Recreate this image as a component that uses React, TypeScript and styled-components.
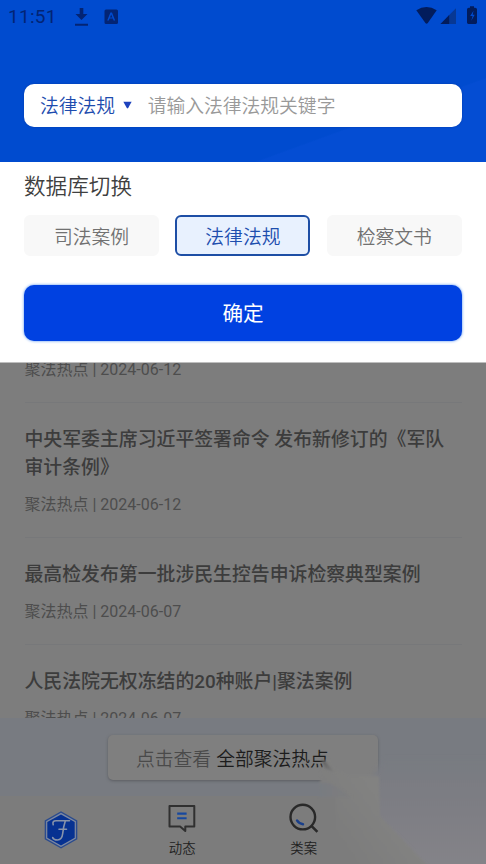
import React from "react";
import styled, { createGlobalStyle } from "styled-components";

const GlobalStyle = createGlobalStyle`
  * { box-sizing: border-box; }
  body { margin: 0; font-family: Roboto, "Noto Sans CJK SC", sans-serif; }
  button, input { font-family: inherit; }
`;

const Screen = styled.div`
  width: 486px;
  height: 864px;
  display: flex;
  flex-direction: column;
  overflow: hidden;
  background: #7d7d7d;
`;

const Header = styled.header`
  flex: 0 0 162px;
  background: linear-gradient(160deg, #004bcf 75%, #044dd3 75.5%);
`;

const StatusBar = styled.div`
  height: 84px;
  padding: 6px 8px 0;
  display: flex;
  align-items: flex-start;
  color: #032474;
`;

const Clock = styled.span`
  width: 66px;
  font-size: 19px;
  line-height: 22px;
  letter-spacing: 0.3px;
`;

const StatusIcons = styled.svg`
  display: block;
  margin-top: -6px;
`;

const Spacer = styled.div`
  flex: 1;
`;

const SearchBox = styled.div`
  margin: 0 24px;
  height: 43px;
  padding: 3px 16px 0;
  display: flex;
  align-items: center;
  background: #fff;
  border-radius: 10px;
  box-shadow: 0 0 2px #003aa8;
  font-size: 18.8px;
  font-weight: 350;
  line-height: 28px;
`;

const Scope = styled.span`
  color: #1d4cae;
  white-space: nowrap;
`;

const Caret = styled.svg`
  margin: -4px 16px 0 7.5px;
`;

const Placeholder = styled.span`
  color: #999;
  white-space: nowrap;
`;

const Panel = styled.section`
  flex: 0 0 201px;
  padding: 9px 24px 0;
  background: #fff;
  border-bottom: 1px solid #bebebe;
`;

const PanelTitle = styled.h2`
  margin: 0;
  height: 44px;
  font-size: 21.6px;
  font-weight: 350;
  line-height: 32px;
  color: #404040;
`;

const Options = styled.div`
  display: grid;
  grid-template-columns: repeat(3, 135px);
  column-gap: 16.4px;
`;

const Option = styled.button<{ $active?: boolean }>`
  height: 41px;
  padding: 5px 0 0;
  border: 2px solid ${(p) => (p.$active ? "#1d4ea5" : "#f8f8f8")};
  border-radius: 6px;
  background: ${(p) => (p.$active ? "#e8f1fe" : "#f8f8f8")};
  color: ${(p) => (p.$active ? "#1d4eae" : "#717171")};
  font-size: 18.8px;
  font-weight: 350;
  line-height: 28px;
`;

const Confirm = styled.button`
  display: block;
  width: 100%;
  height: 56px;
  margin-top: 29px;
  padding: 2px 0 0;
  border: 0;
  border-radius: 10px;
  background: #0041e1;
  box-shadow: 0 0 3px #4b8cef;
  color: #fff;
  font-size: 20.6px;
  line-height: 30px;
`;

const Feed = styled.main`
  flex: 0 0 355px;
  padding: 0 24.5px;
  overflow: hidden;
`;

const Article = styled.article`
  padding: 23px 0 19px;
  border-bottom: 1px solid #77787a;
  &:first-child {
    padding-top: 0;
    margin-top: -6px;
  }
`;

const ArticleTitle = styled.h3`
  margin: 0 10px 10px 0;
  font-size: 18.86px;
  font-weight: 500;
  line-height: 28px;
  color: #3c3c3c;
`;

const Meta = styled.div`
  font-size: 16px;
  line-height: 26px;
  color: #4d4d4d;
`;

const Footer = styled.footer`
  position: relative;
  flex: 0 0 146px;
`;

const MoreStrip = styled.div`
  height: 78px;
  padding-top: 17px;
  background: #787b81;
`;

const MoreButton = styled.button`
  display: flex;
  align-items: center;
  gap: 5px;
  width: 270px;
  height: 45px;
  margin: 0 0 0 108px;
  padding: 5px 0 0 28px;
  border: 0;
  border-radius: 5px;
  background: #7f7f7f;
  box-shadow: 0 1px 3px #5b5d62;
  color: #4a4a4a;
  font-size: 18.8px;
  font-weight: 350;
  line-height: 28px;
  white-space: nowrap;
`;

const MoreStrong = styled.span`
  color: #1c1c1c;
`;

const Nav = styled.nav`
  height: 68px;
  display: grid;
  grid-template-columns: repeat(4, 121.5px);
  background: #7c7c7c;
`;

const NavItem = styled.div`
  display: flex;
  flex-direction: column;
  align-items: center;
  padding: 5px 0 0;
  font-size: 13.4px;
  font-weight: 350;
  line-height: 20px;
  color: #202020;
`;

const NavIcon = styled.svg`
  display: block;
  margin-bottom: 4px;
`;

const Logo = styled.svg`
  display: block;
  margin-top: 9px;
`;

const Sheen = styled.svg`
  position: absolute;
  right: 0;
  bottom: 0;
  pointer-events: none;
`;

const articles = [
  { title: "中央军委主席习近平签署命令 发布新修订的《军队审计条例》", date: "2024-06-12" },
  { title: "最高检发布第一批涉民生控告申诉检察典型案例", date: "2024-06-07" },
  { title: "人民法院无权冻结的20种账户|聚法案例", date: "2024-06-07" },
];

const NotificationIcons = () => (
  <StatusIcons width="46" height="28" viewBox="74 0 46 28" fill="#032474">
    <path d="M79.7 8h3.6v6h4.2l-6 6-6-6h4.2zM75 23.8h13v1.9H75z" />
    <path
      fillRule="evenodd"
      d="M106 9.5h10.5q1.5 0 1.5 1.5v11.5q0 1.5-1.5 1.5H106q-1.5 0-1.5-1.5V11q0-1.5 1.5-1.5zM110.4 12.5l-3.2 8h1.6l.7-1.9h3.4l.7 1.9h1.6l-3.2-8zm.8 2 1.2 2.9H110z"
    />
  </StatusIcons>
);

const DeviceIcons = () => (
  <StatusIcons width="65" height="28" viewBox="413 0 65 28" fill="#021c5c">
    <path d="M416.3 10.2Q426.5 4 436.7 10.2L427.8 23q-1.2 1.4-2.4 0z" />
    <path d="M456 8.2V24h-8V16.2z" fill="#073894" />
    <path d="M449.2 15V24h-8.8z" />
    <path
      fillRule="evenodd"
      d="M470 6.2h4v1.6h1.2q1.8 0 1.8 1.8v13q0 1.4-1.4 1.4h-7.2q-1.4 0-1.4-1.4v-13q0-1.8 1.8-1.8h1.2zM473.5 10.8l-3.3 5.2h2.4l-1.3 4.8 3.4-6h-2z"
    />
  </StatusIcons>
);

export default function App() {
  return (
    <Screen>
      <GlobalStyle />
      <Header>
        <StatusBar>
          <Clock>11:51</Clock>
          <NotificationIcons />
          <Spacer />
          <DeviceIcons />
        </StatusBar>
        <SearchBox>
          <Scope>法律法规</Scope>
          <Caret width="9" height="8" viewBox="0 0 8 7" fill="#1d42bd">
            <path d="M.3.5h7.4L4.6 6.2q-.6.8-1.2 0z" />
          </Caret>
          <Placeholder>请输入法律法规关键字</Placeholder>
        </SearchBox>
      </Header>

      <Panel>
        <PanelTitle>数据库切换</PanelTitle>
        <Options>
          <Option>司法案例</Option>
          <Option $active>法律法规</Option>
          <Option>检察文书</Option>
        </Options>
        <Confirm>确定</Confirm>
      </Panel>

      <Feed>
        <Article>
          <Meta>聚法热点 | 2024-06-12</Meta>
        </Article>
        {articles.map((a) => (
          <Article key={a.title}>
            <ArticleTitle>{a.title}</ArticleTitle>
            <Meta>聚法热点 | {a.date}</Meta>
          </Article>
        ))}
      </Feed>

      <Footer>
        <MoreStrip>
          <MoreButton>
            <span>点击查看</span>
            <MoreStrong>全部聚法热点</MoreStrong>
          </MoreButton>
        </MoreStrip>
        <Nav>
          <NavItem>
            <Logo width="36" height="40" viewBox="0 0 36 40">
              <path d="M18 1.2 34.3 10.5V29.2L18 38.6 1.7 29.2V10.5z" fill="#2b4b8d" />
              <path d="M18 2.8 32.9 11.3V28.4L18 37 3.1 28.4V11.3z" fill="#7e89a0" />
              <path d="M18 4.4 31.7 12.1V27.7L18 35.4 4.3 27.7V12.1z" fill="#063191" />
              <path
                d="M10.2 14.7Q9 10.8 13 10.8H26.5M22.3 11Q20.3 17 19.7 23.5 19 29.8 14.4 30 10.6 29.9 9.7 27.6M16 19.3h7.5"
                fill="none"
                stroke="#8793aa"
                strokeWidth="1.6"
                strokeLinecap="round"
              />
            </Logo>
          </NavItem>
          <NavItem>
            <NavIcon width="34" height="34" viewBox="0 0 34 34" fill="none">
              <path
                d="M4.5 5.1h24.8v20.5h-9v4.3l-5.2-4.3H4.5z"
                stroke="#303030"
                strokeWidth="2"
                strokeLinejoin="round"
              />
              <path d="M12.2 12.6h9.4M12.2 17.2h9.4" stroke="#17489f" strokeWidth="2.1" />
            </NavIcon>
            动态
          </NavItem>
          <NavItem>
            <NavIcon width="34" height="34" viewBox="0 0 34 34" fill="none">
              <circle cx="15.8" cy="16.1" r="12.3" stroke="#292929" strokeWidth="2.4" />
              <path d="m24.4 24.8 6 6" stroke="#292929" strokeWidth="2.6" />
              <path d="M10 19.4q2 3.2 6 3.8" stroke="#193f8b" strokeWidth="2.4" strokeLinecap="round" />
            </NavIcon>
            类案
          </NavItem>
        </Nav>
        <Sheen width="176" height="126" viewBox="310 738 176 126">
          <defs>
            <linearGradient id="corner" x1="0" y1="0" x2="0" y2="1">
              <stop offset="0" stopColor="#787b81" />
              <stop offset="0.45" stopColor="#7e7e84" />
              <stop offset="1" stopColor="#858489" />
            </linearGradient>
            <linearGradient id="fold" gradientUnits="userSpaceOnUse" x1="335" y1="840" x2="385" y2="805">
              <stop offset="0" stopColor="#7c7c7c" />
              <stop offset="1" stopColor="#828281" />
            </linearGradient>
            <linearGradient id="smear" gradientUnits="userSpaceOnUse" x1="318" y1="0" x2="352" y2="0">
              <stop offset="0" stopColor="#787b81" />
              <stop offset="1" stopColor="#7e7e7e" />
            </linearGradient>
            <linearGradient id="crease" gradientUnits="userSpaceOnUse" x1="324" y1="758" x2="334" y2="774">
              <stop offset="0" stopColor="#606060" />
              <stop offset="1" stopColor="#7e7e7e" />
            </linearGradient>
            <filter id="soft" x="-20%" y="-20%" width="140%" height="140%">
              <feGaussianBlur stdDeviation="2.5" />
            </filter>
            <filter id="edge" x="-20%" y="-20%" width="140%" height="140%">
              <feGaussianBlur stdDeviation="1.2" />
            </filter>
          </defs>
          <path d="M384 760H496V874H370V780z" fill="url(#corner)" filter="url(#soft)" />
          <path d="M321 770 327 758 334 768 348 776H379L380 816 436 874H336V796L320 790z" fill="url(#fold)" filter="url(#edge)" />
          <path d="M319 783H330L352 797H319z" fill="url(#smear)" filter="url(#edge)" />
          <path d="M321 759 325 761 335 773 325 768z" fill="url(#crease)" filter="url(#edge)" />
        </Sheen>
      </Footer>
    </Screen>
  );
}
